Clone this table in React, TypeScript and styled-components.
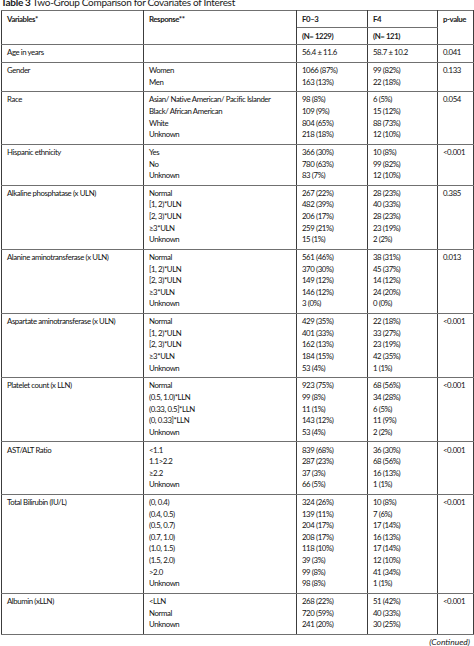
import React from "react";
import styled, { createGlobalStyle } from "styled-components";

const GlobalStyle = createGlobalStyle`
  body {
    margin: 0;
    background: #ffffff;
    font-family: "Lato", "Noto Sans", sans-serif;
    color: #111111;
    overflow: hidden;
  }
`;

type Row = {
  name: string;
  responses: string[];
  f03: string[];
  f4: string[];
  p: string;
};

const rows: Row[] = [
  { name: "Age in years", responses: [""], f03: ["56.4 ± 11.6"], f4: ["58.7 ± 10.2"], p: "0.041" },
  { name: "Gender", responses: ["Women", "Men"], f03: ["1066 (87%)", "163 (13%)"], f4: ["99 (82%)", "22 (18%)"], p: "0.133" },
  {
    name: "Race",
    responses: ["Asian/ Native American/ Pacific Islander", "Black/ African American", "White", "Unknown"],
    f03: ["98 (8%)", "109 (9%)", "804 (65%)", "218 (18%)"],
    f4: ["6 (5%)", "15 (12%)", "88 (73%)", "12 (10%)"],
    p: "0.054",
  },
  { name: "Hispanic ethnicity", responses: ["Yes", "No", "Unknown"], f03: ["366 (30%)", "780 (63%)", "83 (7%)"], f4: ["10 (8%)", "99 (82%)", "12 (10%)"], p: "<0.001" },
  {
    name: "Alkaline phosphatase (x ULN)",
    responses: ["Normal", "[1, 2)*ULN", "[2, 3)*ULN", "≥3*ULN", "Unknown"],
    f03: ["267 (22%)", "482 (39%)", "206 (17%)", "259 (21%)", "15 (1%)"],
    f4: ["28 (23%)", "40 (33%)", "28 (23%)", "23 (19%)", "2 (2%)"],
    p: "0.385",
  },
  {
    name: "Alanine aminotransferase (x ULN)",
    responses: ["Normal", "[1, 2)*ULN", "[2, 3)*ULN", "≥3*ULN", "Unknown"],
    f03: ["561 (46%)", "370 (30%)", "149 (12%)", "146 (12%)", "3 (0%)"],
    f4: ["38 (31%)", "45 (37%)", "14 (12%)", "24 (20%)", "0 (0%)"],
    p: "0.013",
  },
  {
    name: "Aspartate aminotransferase (x ULN)",
    responses: ["Normal", "[1, 2)*ULN", "[2, 3)*ULN", "≥3*ULN", "Unknown"],
    f03: ["429 (35%)", "401 (33%)", "162 (13%)", "184 (15%)", "53 (4%)"],
    f4: ["22 (18%)", "33 (27%)", "23 (19%)", "42 (35%)", "1 (1%)"],
    p: "<0.001",
  },
  {
    name: "Platelet count (x LLN)",
    responses: ["Normal", "(0.5, 1.0)*LLN", "(0.33, 0.5]*LLN", "(0, 0.33]*LLN", "Unknown"],
    f03: ["923 (75%)", "99 (8%)", "11 (1%)", "143 (12%)", "53 (4%)"],
    f4: ["68 (56%)", "34 (28%)", "6 (5%)", "11 (9%)", "2 (2%)"],
    p: "<0.001",
  },
  {
    name: "AST/ALT Ratio",
    responses: ["<1.1", "1.1>2.2", "≥2.2", "Unknown"],
    f03: ["839 (68%)", "287 (23%)", "37 (3%)", "66 (5%)"],
    f4: ["36 (30%)", "68 (56%)", "16 (13%)", "1 (1%)"],
    p: "<0.001",
  },
  {
    name: "Total Bilirubin (IU/L)",
    responses: ["(0, 0.4)", "(0.4, 0.5)", "(0.5, 0.7)", "(0.7, 1.0)", "(1.0, 1.5)", "(1.5, 2.0)", ">2.0", "Unknown"],
    f03: ["324 (26%)", "139 (11%)", "204 (17%)", "208 (17%)", "118 (10%)", "39 (3%)", "99 (8%)", "98 (8%)"],
    f4: ["10 (8%)", "7 (6%)", "17 (14%)", "16 (13%)", "17 (14%)", "12 (10%)", "41 (34%)", "1 (1%)"],
    p: "<0.001",
  },
  {
    name: "Albumin (xLLN)",
    responses: ["<LLN", "Normal", "Unknown"],
    f03: ["268 (22%)", "720 (59%)", "241 (20%)"],
    f4: ["51 (42%)", "40 (33%)", "30 (25%)"],
    p: "<0.001",
  },
];

const Lines = ({ items }: { items: string[] }) => (
  <>
    {items.map((t, i) => (
      <Line key={i}>{t || "\u00a0"}</Line>
    ))}
  </>
);

const App = () => {
  return (
    <Page>
      <GlobalStyle />
      <Caption>
        <strong>Table 3</strong> Two-Group Comparison for Covariates of Interest
      </Caption>
      <Table>
        <colgroup>
          <col style={{ width: 142 }} />
          <col style={{ width: 153 }} />
          <col style={{ width: 71 }} />
          <col style={{ width: 70 }} />
          <col style={{ width: 36 }} />
        </colgroup>
        <thead>
          <tr>
            <Head rowSpan={2}>Variables*</Head>
            <Head rowSpan={2}>Response**</Head>
            <Head>F0–3</Head>
            <Head>F4</Head>
            <Head rowSpan={2}>p-value</Head>
          </tr>
          <tr>
            <Head>(N= 1229)</Head>
            <Head>(N= 121)</Head>
          </tr>
        </thead>
        <tbody>
          {rows.map((r) => (
            <tr key={r.name}>
              <Cell>
                <Line>{r.name}</Line>
              </Cell>
              <Cell>
                <Lines items={r.responses} />
              </Cell>
              <Cell>
                <Lines items={r.f03} />
              </Cell>
              <Cell>
                <Lines items={r.f4} />
              </Cell>
              <Cell>
                <Line>{r.p}</Line>
              </Cell>
            </tr>
          ))}
        </tbody>
      </Table>
      <Footer>(Continued)</Footer>
    </Page>
  );
};

export default App;

const Page = styled.div`
  width: 474px;
  height: 646px;
  overflow: hidden;
  padding-left: 1px;
  box-sizing: border-box;
`;

const Caption = styled.div`
  margin-top: -5px;
  height: 15px;
  line-height: 15px;
  font-size: 10px;
  color: #1a1a1a;
  white-space: nowrap;
  letter-spacing: -0.3px;

  strong {
    font-weight: 700;
  }
`;

const Table = styled.table`
  width: 472px;
  table-layout: fixed;
  border-collapse: collapse;
  font-size: 7.8px;
  letter-spacing: -0.4px;
  border-top: 1px solid #5e5e5e;
  border-bottom: 1px solid #5e5e5e;
`;

const Head = styled.th`
  text-align: left;
  vertical-align: top;
  font-weight: 700;
  padding: 3px 5px 2px;
  height: 11px;
  line-height: 11px;
  border: 1px solid #707070;
  border-left-color: #3c3c3c;
  border-right-color: #3c3c3c;
  color: #1a1a1a;
  white-space: nowrap;
`;

const Cell = styled.td`
  vertical-align: top;
  padding: 2.2px 5px 3px;
  border: 1px solid #707070;
  border-left-color: #3c3c3c;
  border-right-color: #3c3c3c;
  white-space: nowrap;
  overflow: visible;
`;

const Line = styled.div`
  line-height: 11.6px;
  height: 11.6px;
`;

const Footer = styled.div`
  text-align: right;
  font-size: 8.5px;
  font-style: italic;
  padding-right: 4px;
  margin-top: 2px;
  color: #1a1a1a;
`;
